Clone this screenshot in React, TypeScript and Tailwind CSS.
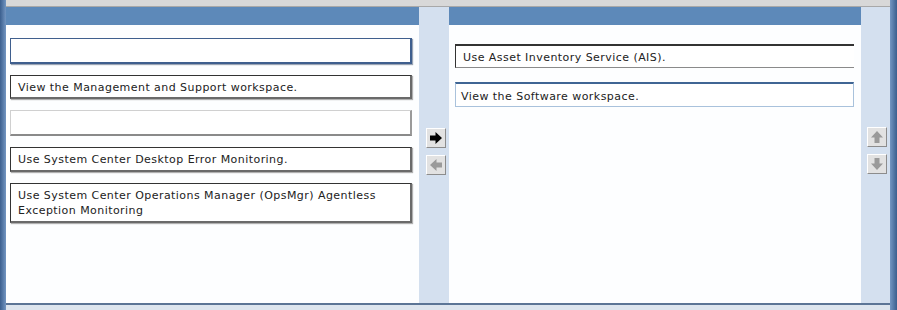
import React from 'react';

// Left list items: text (or empty) and box style
interface Item {
  text: string;
  h: string;
  kind: 'focus' | 'normal' | 'faint';
}

const leftItems: Item[] = [
  { text: '', h: 'h-[26px]', kind: 'focus' },
  { text: 'View the Management and Support workspace.', h: 'h-[24px]', kind: 'normal' },
  { text: '', h: 'h-[26px]', kind: 'faint' },
  { text: 'Use System Center Desktop Error Monitoring.', h: 'h-[25px]', kind: 'normal' },
  { text: 'Use System Center Operations Manager (OpsMgr) Agentless Exception Monitoring', h: 'h-[40px]', kind: 'normal' },
];

const boxClass = {
  focus: 'border border-[#3f5f8e] border-b-2 border-r-2 shadow-[1px_1px_1px_#9aa4b4]',
  normal: 'border border-[#333333] border-b-2 border-r-2 border-b-[#6a6a6a] border-r-[#6a6a6a] shadow-[1px_1px_1px_#b0b0b0]',
  faint: 'border border-[#d0d0d0] border-b-2 border-r-2 border-b-[#8a8a8a] border-r-[#9a9a9a]',
};

// Block arrow used by the move / reorder buttons
const Arrow = ({ dir, color }: { dir: 'right' | 'left' | 'up' | 'down'; color: string }) => {
  const rot = { right: 0, left: 180, up: -90, down: 90 }[dir];
  return (
    <svg width="14" height="14" viewBox="0 0 14 14" style={{ transform: `rotate(${rot}deg)` }}>
      <path d="M1 4.5 H6.5 V1 L13 7 L6.5 13 V9.5 H1 Z" fill={color} />
    </svg>
  );
};

const ArrowButton = ({ dir, active }: { dir: 'right' | 'left' | 'up' | 'down'; active?: boolean }) => (
  <div className="w-[20px] h-[20px] flex items-center justify-center bg-[#e2e2e2] border border-t-white border-l-white border-b-[#8c8c8c] border-r-[#8c8c8c]">
    <Arrow dir={dir} color={active ? '#000000' : '#9a9a9a'} />
  </div>
);

const App: React.FC = () => {
  return (
    <div className="w-[897px] h-[310px] flex bg-[#d4e0ef] overflow-hidden" style={{ fontFamily: '"DejaVu Sans", Verdana, sans-serif' }}>
      {/* left frame edge */}
      <div className="w-[6px] h-full bg-gradient-to-r from-[#3b5f8e] to-[#7396c2]" />

      <div className="flex-1 flex flex-col">
        {/* top gray strip */}
        <div className="h-[7px] bg-[#d8d8d8] border-b border-[#a8a8a8]" />

        <div className="flex h-[296px]">
          {/* left list */}
          <div className="w-[413px] flex flex-col bg-[#fdfeff]">
            <div className="h-[18px] bg-[#5d89b9]" />
            <div className="flex flex-col gap-[11px] pt-[13px] pl-[4px] pr-[7px]">
              {leftItems.map((item, i) => (
                <div
                  key={i}
                  className={`${item.h} ${boxClass[item.kind]} bg-white flex items-center pl-[7px] pr-3 pt-[1px] text-[11px] tracking-[0.45px] leading-[15px] text-[#222]`}
                >
                  <span className="max-w-[380px]">{item.text}</span>
                </div>
              ))}
            </div>
          </div>

          {/* move buttons */}
          <div className="w-[30px] flex flex-col items-center gap-[7px] pt-[121px] pl-[4px]">
            <ArrowButton dir="right" active />
            <ArrowButton dir="left" />
          </div>

          {/* right list */}
          <div className="w-[412px] flex flex-col bg-[#fdfeff]">
            <div className="h-[18px] bg-[#5d89b9]" />
            <div className="flex flex-col gap-[14px] pt-[19px] pl-[6px] pr-[7px]">
              <div className="h-[24px] border-t-2 border-l border-t-[#333333] border-l-[#333333] border-b border-b-[#8a8a8a] bg-white flex items-center pl-[7px] pt-[3px] text-[11px] tracking-[0.45px] text-[#222]">
                Use Asset Inventory Service (AIS).
              </div>
              <div className="h-[25px] border border-t-2 border-t-[#3f6594] border-[#a9c2dc] bg-white flex items-center pl-[5px] pt-[4px] text-[11px] tracking-[0.45px] text-[#222]">
                View the Software workspace.
              </div>
            </div>
          </div>

          {/* reorder buttons */}
          <div className="w-[29px] flex flex-col items-center gap-[7px] pt-[120px] pl-[3px]">
            <ArrowButton dir="up" />
            <ArrowButton dir="down" />
          </div>
        </div>

        {/* bottom edge */}
        <div className="h-[2px] bg-[#5c7596]" />
        <div className="flex-1 bg-[#dde5ee]" />
      </div>

      {/* right frame edge */}
      <div className="w-[7px] h-full bg-gradient-to-r from-[#7396c2] to-[#3b5f8e]" />
    </div>
  );
};

export default App;
